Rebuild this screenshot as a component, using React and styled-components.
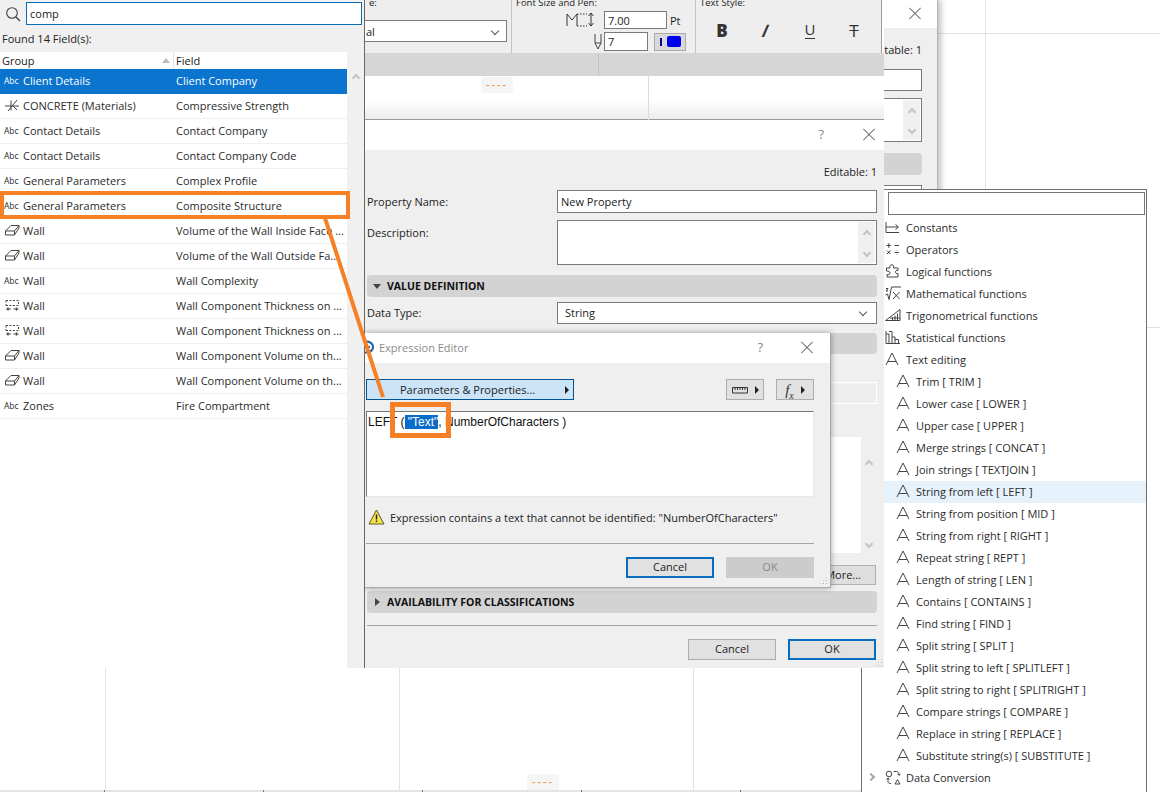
import React from 'react'
import styled, { createGlobalStyle } from 'styled-components'

const GlobalStyle = createGlobalStyle`
  html, body {
    margin: 0;
    padding: 0;
    background: #fff;
    overflow: hidden;
  }
  * {
    box-sizing: border-box;
  }
`

const FIELDS = [
  { icon: 'abc', group: 'Client Details', field: 'Client Company', selected: true },
  { icon: 'concrete', group: 'CONCRETE (Materials)', field: 'Compressive Strength' },
  { icon: 'abc', group: 'Contact Details', field: 'Contact Company' },
  { icon: 'abc', group: 'Contact Details', field: 'Contact Company Code' },
  { icon: 'abc', group: 'General Parameters', field: 'Complex Profile' },
  { icon: 'abc', group: 'General Parameters', field: 'Composite Structure' },
  { icon: 'wall', group: 'Wall', field: 'Volume of the Wall Inside Face ...' },
  { icon: 'wall', group: 'Wall', field: 'Volume of the Wall Outside Fa...' },
  { icon: 'abc', group: 'Wall', field: 'Wall Complexity' },
  { icon: 'thickness', group: 'Wall', field: 'Wall Component Thickness on ...' },
  { icon: 'thickness', group: 'Wall', field: 'Wall Component Thickness on ...' },
  { icon: 'wall', group: 'Wall', field: 'Wall Component Volume on th...' },
  { icon: 'wall', group: 'Wall', field: 'Wall Component Volume on th...' },
  { icon: 'abc', group: 'Zones', field: 'Fire Compartment' },
]

const FUNCTIONS = [
  { icon: 'constants', label: 'Constants' },
  { icon: 'operators', label: 'Operators' },
  { icon: 'puzzle', label: 'Logical functions' },
  { icon: 'root', label: 'Mathematical functions' },
  { icon: 'trig', label: 'Trigonometrical functions' },
  { icon: 'stats', label: 'Statistical functions' },
  { icon: 'letter', label: 'Text editing' },
  { icon: 'letter', label: 'Trim [ TRIM ]', nested: true },
  { icon: 'letter', label: 'Lower case [ LOWER ]', nested: true },
  { icon: 'letter', label: 'Upper case [ UPPER ]', nested: true },
  { icon: 'letter', label: 'Merge strings [ CONCAT ]', nested: true },
  { icon: 'letter', label: 'Join strings [ TEXTJOIN ]', nested: true },
  { icon: 'letter', label: 'String from left [ LEFT ]', nested: true, active: true },
  { icon: 'letter', label: 'String from position [ MID ]', nested: true },
  { icon: 'letter', label: 'String from right [ RIGHT ]', nested: true },
  { icon: 'letter', label: 'Repeat string [ REPT ]', nested: true },
  { icon: 'letter', label: 'Length of string [ LEN ]', nested: true },
  { icon: 'letter', label: 'Contains [ CONTAINS ]', nested: true },
  { icon: 'letter', label: 'Find string [ FIND ]', nested: true },
  { icon: 'letter', label: 'Split string [ SPLIT ]', nested: true },
  { icon: 'letter', label: 'Split string to left [ SPLITLEFT ]', nested: true },
  { icon: 'letter', label: 'Split string to right [ SPLITRIGHT ]', nested: true },
  { icon: 'letter', label: 'Compare strings [ COMPARE ]', nested: true },
  { icon: 'letter', label: 'Replace in string [ REPLACE ]', nested: true },
  { icon: 'letter', label: 'Substitute string(s) [ SUBSTITUTE ]', nested: true },
  { icon: 'convert', label: 'Data Conversion', collapsed: true },
]

const Glyph = ({ width = 16, height = 14, color = '#444', children }) => (
  <svg width={width} height={height} viewBox={`0 0 ${width} ${height}`} fill="none" stroke={color} strokeWidth="1">
    {children}
  </svg>
)

const FIELD_ICONS = {
  concrete: (
    <Glyph>
      <path d="M1 8H15M4 13L13 2M7 2.5V12.5M9 8L13 12" />
    </Glyph>
  ),
  wall: (
    <Glyph>
      <path d="M1.5 8L7 2.5H15V5L10.5 12H1.5ZM1.5 8H10.5V12M10.5 8L15 2.5" />
    </Glyph>
  ),
  thickness: (
    <Glyph>
      <path d="M2 2.5H14.5V7.5M2 2.5V7.5" strokeDasharray="2 1.5" />
      <path d="M2 7.5H14.5" strokeDasharray="2 1.5" />
      <path d="M2 11H7M9.5 11H14.5" />
      <path d="M4 9.5V12.5M12.5 9.5V12.5" strokeWidth="1.4" />
    </Glyph>
  ),
}

const FUNCTION_ICONS = {
  constants: (
    <Glyph width={15} height={14}>
      <path d="M1 2V12.5H14M1 7H13M10.5 4.5L13.5 7L10.5 9.5" />
    </Glyph>
  ),
  operators: (
    <Glyph width={15} height={14}>
      <path d="M1.5 3.5H6M3.75 1.2V5.8M9.5 3.5H14M2 8.5L5.5 12M5.5 8.5L2 12M9.5 10.5H14M11.75 8.5V8.8M11.75 12.2V12.5" />
    </Glyph>
  ),
  puzzle: (
    <Glyph width={15} height={14}>
      <path d="M1.5 7V4H5C4.5 1.5 5.5 .8 7 .8S9.2 2 8.5 4H13V6.5C11 6 10.5 7 10.5 8S11 10 13 9.5V13H2V10.5C3.5 11 5 10.5 5 9S3.5 7 1.5 7Z" />
    </Glyph>
  ),
  root: (
    <Glyph width={16} height={14}>
      <path d="M.5 9L2.5 8L4 13.5L6.5 1H16M8 6L14.5 13M14.5 6L8 13M1 2.5H3L1 5H3" />
    </Glyph>
  ),
  trig: (
    <Glyph width={16} height={14}>
      <path d="M.5 12.5L15 1.5V12.5ZM12.5 12.5V5.5M10 12.5V7.5M7.5 12.5V9.5M5 10H15" />
    </Glyph>
  ),
  stats: (
    <Glyph width={15} height={14}>
      <path d="M1 1V13.5H15M1 4H4V13M4 1.5H7V13M7 7H10V13M10 9.5H13.5V13" />
    </Glyph>
  ),
  letter: (
    <Glyph width={14} height={14}>
      <path d="M1 13L7 1L13 13M3 9.5H11" />
    </Glyph>
  ),
  convert: (
    <Glyph width={16} height={15}>
      <circle cx="4" cy="4" r="2.8" />
      <path d="M8.5 1.5H11.5C13 1.5 14 2.5 14 5M12.5 3.8L14 5.5L15.5 3.8M1.5 9.5L3 8L4.5 9.5M3 8.5V11.5C3 13 4 13.5 6 13.5M10 14L12.5 9.5L15 14Z" />
    </Glyph>
  ),
}

const App = () => (
  <Desktop>
    <GlobalStyle />

    <SheetFooter />
    <FooterBadge>----</FooterBadge>

    <BackDialog>
      <TitleBar>
        <CloseMark />
      </TitleBar>
      <BackBody>
        <EditableLabel>Editable: 1</EditableLabel>
        <BackField />
        <BackDescription>
          <ScrollGutter>
            <Chevron $up />
            <Chevron />
          </ScrollGutter>
        </BackDescription>
        <BackBar />
        <BackField />
      </BackBody>
    </BackDialog>

    <FunctionPanel>
      <FunctionSearch />
      {FUNCTIONS.map(({ icon, label, nested, active, collapsed }) => (
        <FunctionRow key={label} $active={active}>
          <Caret>{collapsed && <Chevron $side />}</Caret>
          <FunctionIcon $nested={nested}>{FUNCTION_ICONS[icon]}</FunctionIcon>
          {label}
        </FunctionRow>
      ))}
    </FunctionPanel>

    <FormatWindow>
      <Ribbon>
        <RibbonSection $width={147}>
          <RibbonLabel>e:</RibbonLabel>
          <StyleSelect>
            al
            <Chevron $dark />
          </StyleSelect>
        </RibbonSection>
        <RibbonSection $width={184}>
          <RibbonLabel>Font Size and Pen:</RibbonLabel>
          <SizeRow>
            <svg width="30" height="16" viewBox="0 0 30 16" fill="none" stroke="#333">
              <path d="M1 14V2L6 8L11 2V14" />
              <path d="M11 2H21M11 14H21" strokeDasharray="1.5 1.5" />
              <path d="M25 1V14M22.5 4L25 1L27.5 4M22.5 11L25 14L27.5 11" />
            </svg>
            <NumberBox $width={63}>7.00</NumberBox>
            <UnitLabel>Pt</UnitLabel>
          </SizeRow>
          <PenRow>
            <svg width="8" height="17" viewBox="0 0 8 17" fill="none" stroke="#444">
              <path d="M1 1V10L4 16L7 10V1M1 10H7" />
            </svg>
            <NumberBox $width={44}>7</NumberBox>
            <PenButton>
              <PenBar />
              <PenSwatch />
            </PenButton>
          </PenRow>
        </RibbonSection>
        <RibbonSection $width={186} $last>
          <RibbonLabel>Text Style:</RibbonLabel>
          <StyleButtons>
            <BoldMark>B</BoldMark>
            <ItalicMark>/</ItalicMark>
            <UnderlineMark>U</UnderlineMark>
            <StrikeMark>T</StrikeMark>
          </StyleButtons>
        </RibbonSection>
      </Ribbon>
      <SheetHeader>
        <SheetHeaderCell />
      </SheetHeader>
      <SheetBody>
        <EmptyBadge>----</EmptyBadge>
      </SheetBody>
    </FormatWindow>

    <PropertyDialog>
      <TitleBar>
        <HelpMark>?</HelpMark>
        <CloseMark />
      </TitleBar>
      <PropertyBody>
        <EditableLabel>Editable: 1</EditableLabel>
        <FormRow $top={9}>
          <span>Property Name:</span>
          <TextBox $height={23}>New Property</TextBox>
        </FormRow>
        <FormRow $top={7} $start>
          <span>Description:</span>
          <TextBox $height={45}>
            <ScrollGutter>
              <Chevron $up />
              <Chevron />
            </ScrollGutter>
          </TextBox>
        </FormRow>
        <SectionBar $top={10} $height={22}>
          <SectionArrow $open />
          VALUE DEFINITION
        </SectionBar>
        <FormRow $top={5} $raised>
          <span>Data Type:</span>
          <TextBox $height={22} $select>
            String
            <Chevron $dark />
          </TextBox>
        </FormRow>
        <SectionBar $top={9} $height={21} />
        <DisabledField />
        <ValueList>
          <ValueListWhite />
          <ListGutter>
            <Chevron $up />
            <Chevron />
          </ListGutter>
        </ValueList>
        <SideButton>More...</SideButton>
        <SectionBar $top={6} $height={22}>
          <SectionArrow />
          AVAILABILITY FOR CLASSIFICATIONS
        </SectionBar>
        <Divider $top={12} />
        <DialogActions $top={13} $inset={1}>
          <DialogButton>Cancel</DialogButton>
          <DialogButton $primary>OK</DialogButton>
        </DialogActions>
      </PropertyBody>
      <Gripper $right={1} $bottom={1} />
    </PropertyDialog>

    <ExpressionDialog>
      <ExpressionTitle>
        <svg width="9" height="14" viewBox="0 0 9 14" fill="none">
          <path d="M0 1.5C4 1 8 3 8 7S4 13 0 12.5" stroke="#1c5fb0" strokeWidth="2" />
          <path d="M0 7H5" stroke="#1c5fb0" strokeWidth="2" />
        </svg>
        <ExpressionName>Expression Editor</ExpressionName>
        <HelpMark>?</HelpMark>
        <CloseMark $gap={38} />
      </ExpressionTitle>
      <ExpressionBody>
        <EditorTools>
          <ParamsButton>
            Parameters &amp; Properties...
            <SideArrow />
          </ParamsButton>
          <ToolButton>
            <svg width="16" height="8" viewBox="0 0 16 8" fill="none" stroke="#333">
              <path d="M.5 1.5H15.5V7H.5ZM3 1.5V4M5.5 1.5V4M8 1.5V4M10.5 1.5V4M13 1.5V4" />
            </svg>
            <SideArrow />
          </ToolButton>
          <ToolButton>
            <FxMark>
              f<sub>x</sub>
            </FxMark>
            <SideArrow />
          </ToolButton>
        </EditorTools>
        <EditorArea>
          LEFT ( <Selected>"Text"</Selected>, NumberOfCharacters )
        </EditorArea>
        <WarningRow>
          <svg width="17" height="16" viewBox="0 0 17 16">
            <path d="M8.5 1L16 15H1Z" fill="#f7e14a" stroke="#5a5a30" />
            <path d="M8.5 5.5V10.5M8.5 11.5V13" stroke="#222" strokeWidth="1.4" />
          </svg>
          Expression contains a text that cannot be identified: "NumberOfCharacters"
        </WarningRow>
        <Divider $top={17} />
        <DialogActions $top={13}>
          <DialogButton $primary>Cancel</DialogButton>
          <DialogButton $disabled>OK</DialogButton>
        </DialogActions>
      </ExpressionBody>
      <Gripper $right={2} $bottom={2} />
    </ExpressionDialog>

    <FieldPanel>
      <SearchRow>
        <svg width="16" height="16" viewBox="0 0 16 16" fill="none" stroke="#444" strokeWidth="1.1">
          <circle cx="7" cy="7" r="5.3" />
          <path d="M11 11L15 15" strokeWidth="1.4" />
        </svg>
        <SearchInput>comp</SearchInput>
      </SearchRow>
      <FoundLabel>Found 14 Field(s):</FoundLabel>
      <FieldArea>
        <FieldTable>
          <FieldHeader>
            <HeaderCell>
              Group
              <SortArrow />
            </HeaderCell>
            <HeaderCell>Field</HeaderCell>
          </FieldHeader>
          {FIELDS.map(({ icon, group, field, selected }, index) => (
            <FieldRow key={index} $selected={selected}>
              <RowIcon>{icon === 'abc' ? <AbcMark>Abc</AbcMark> : FIELD_ICONS[icon]}</RowIcon>
              <span>{group}</span>
              <FieldName>{field}</FieldName>
            </FieldRow>
          ))}
        </FieldTable>
        <FieldScroll>
          <Chevron $up />
        </FieldScroll>
      </FieldArea>
    </FieldPanel>

    <CalloutLine width="1160" height="792" viewBox="0 0 1160 792">
      <path d="M325 218L383 397" stroke="#f58025" strokeWidth="4" />
    </CalloutLine>
    <RowCallout />
    <TextCallout />
  </Desktop>
)

const uiFont = `'Open Sans', 'Noto Sans', sans-serif`

const Desktop = styled.div`
  position: relative;
  width: 1160px;
  height: 792px;
  overflow: hidden;
  color: #222;
  font-family: ${uiFont};
  font-size: 11px;
  background-color: #fff;
  background-image:
    linear-gradient(#e2e2e2, #e2e2e2), linear-gradient(#e2e2e2, #e2e2e2),
    linear-gradient(#e2e2e2, #e2e2e2), linear-gradient(#e2e2e2, #e2e2e2),
    linear-gradient(#e2e2e2, #e2e2e2), linear-gradient(#e2e2e2, #e2e2e2);
  background-repeat: no-repeat;
  background-size: 1px 190px, 222px 1px, 1px 124px, 1px 124px, 1px 124px, 13px 1px;
  background-position: 985px 0, 938px 33px, 105px 668px, 399px 668px, 693px 668px, 1147px 327px;
`

const SheetFooter = styled.div`
  position: absolute;
  left: 0;
  top: 790px;
  width: 861px;
  height: 2px;
  background-color: #e4e4e4;
  background-size: 1px 2px;
  background-repeat: no-repeat;
  background-image:
    linear-gradient(#777, #777), linear-gradient(#777, #777), linear-gradient(#777, #777),
    linear-gradient(#777, #777), linear-gradient(#777, #777);
  background-position: 104px 0, 263px 0, 422px 0, 581px 0, 740px 0;
`

const EmptyBadge = styled.div`
  width: 32px;
  height: 16px;
  margin-top: 1px;
  color: #f39a55;
  font-size: 11px;
  font-weight: 600;
  letter-spacing: 2px;
  line-height: 15px;
  text-align: center;
  border-radius: 2px;
  background: #f5f5f5;
`

const FooterBadge = styled(EmptyBadge)`
  position: absolute;
  left: 527px;
  top: 774px;
  margin-top: 0;
`

const Window = styled.section`
  position: absolute;
  display: flex;
  flex-direction: column;
  background: #efefef;
`

const TitleBar = styled.header`
  display: flex;
  flex: none;
  align-items: center;
  justify-content: flex-end;
  height: 30px;
  padding: 0 9px 2px 0;
  background: #fff;
`

const CloseMark = styled.span`
  position: relative;
  flex: none;
  width: 12px;
  height: 12px;
  margin-left: ${({ $gap }) => $gap || 39}px;

  &::before,
  &::after {
    content: '';
    position: absolute;
    left: -2px;
    top: 5.5px;
    width: 16px;
    height: 1px;
    background: #777;
    transform: rotate(45deg);
  }

  &::after {
    transform: rotate(-45deg);
  }
`

const HelpMark = styled.span`
  color: #888;
  font-size: 13px;
`

const Chevron = styled.i`
  display: block;
  flex: none;
  width: 6px;
  height: 6px;
  border-style: solid;
  border-color: ${({ $dark, $side }) => ($dark ? '#555' : $side ? '#aaa' : '#c4c4c4')};
  border-width: 0 ${({ $dark }) => ($dark ? 1 : 2)}px ${({ $dark }) => ($dark ? 1 : 2)}px 0;
  transform: rotate(${({ $up, $side }) => ($up ? 225 : $side ? -45 : 45)}deg);
`

const ScrollGutter = styled.div`
  position: absolute;
  top: 1px;
  right: 1px;
  bottom: 1px;
  display: flex;
  flex-direction: column;
  align-items: center;
  justify-content: space-between;
  width: 17px;
  padding: 9px 0 7px;
  background: #f0f0f0;
`

const BackDialog = styled(Window)`
  left: 800px;
  top: 0;
  width: 138px;
  height: 200px;
  box-shadow: 3px 0 6px rgba(0, 0, 0, 0.25);
  border-right: 1px solid #b5b5b5;

  ${TitleBar} {
    height: 28px;
    padding-right: 16px;
  }
`

const EditableLabel = styled.div`
  flex: none;
  height: 18px;
  line-height: 18px;
  text-align: right;
  margin-top: 13px;
`

const BackBody = styled.div`
  display: flex;
  flex-direction: column;
  padding-right: 15px;
`

const BackField = styled.div`
  flex: none;
  height: 22px;
  margin-top: 10px;
  background: #fff;
  border: 1px solid #7a7a7a;
`

const BackDescription = styled.div`
  position: relative;
  flex: none;
  height: 44px;
  margin-top: 7px;
  background: #fff;
  border: 1px solid #7a7a7a;
`

const BackBar = styled.div`
  flex: none;
  height: 22px;
  margin-top: 11px;
  border-radius: 4px;
  background: #d3d3d3;
`

const FunctionPanel = styled.aside`
  position: absolute;
  left: 861px;
  top: 189px;
  width: 286px;
  height: 620px;
  background: #fff;
  border: 1px solid #6f6f6f;
`

const FunctionSearch = styled.div`
  width: 257px;
  height: 23px;
  margin: 2px 1px 2px 26px;
  background: #fff;
  border: 1px solid #777;
`

const FunctionRow = styled.div`
  display: flex;
  align-items: center;
  height: 22px;
  padding-bottom: 2px;
  color: #2b2b2b;
  white-space: nowrap;
  background: ${({ $active }) => ($active ? '#e5f1fb' : 'transparent')};
`

const Caret = styled.span`
  flex: none;
  width: 23px;
  padding-left: 6px;
`

const FunctionIcon = styled.span`
  display: flex;
  flex: none;
  width: 21px;
  margin-left: ${({ $nested }) => ($nested ? 11 : 0)}px;
  margin-right: ${({ $nested }) => ($nested ? -1 : 0)}px;
`

const FormatWindow = styled.section`
  position: absolute;
  left: 365px;
  top: 0;
  display: flex;
  flex-direction: column;
  width: 519px;
  height: 120px;
  background: #fff;
`

const Ribbon = styled.div`
  display: flex;
  flex: none;
  width: 517px;
  height: 53px;
  background: #eee;
  border-right: 1px solid #9c9c9c;
`

const RibbonSection = styled.div`
  position: relative;
  flex: none;
  width: ${({ $width }) => $width}px;
  height: 53px;
  border-right: ${({ $last }) => ($last ? 'none' : '1px solid #c4c4c4')};
`

const RibbonLabel = styled.div`
  height: 11px;
  margin-top: -3px;
  padding-left: 4px;
  line-height: 11px;
  font-size: 9.5px;
`

const StyleSelect = styled.div`
  display: flex;
  align-items: center;
  justify-content: space-between;
  width: 147px;
  height: 22px;
  margin: 12px 0 0 -5px;
  padding: 0 8px 0 5px;
  background: #fff;
  border: 1px solid #7a7a7a;
`

const SizeRow = styled.div`
  display: flex;
  align-items: center;
  height: 18px;
  margin-top: 3px;
  padding-left: 54px;

  svg {
    margin-right: 8px;
  }
`

const PenRow = styled.div`
  display: flex;
  align-items: center;
  height: 19px;
  margin-top: 3px;
  padding-left: 82px;

  svg {
    margin-right: 2px;
  }
`

const NumberBox = styled.div`
  flex: none;
  width: ${({ $width }) => $width}px;
  height: 100%;
  padding-left: 3px;
  line-height: 17px;
  background: #fff;
  border: 1px solid #7a7a7a;
`

const UnitLabel = styled.span`
  margin-left: 3px;
`

const PenButton = styled.div`
  display: flex;
  align-items: center;
  gap: 5px;
  flex: none;
  width: 32px;
  height: 18px;
  margin-left: 6px;
  padding-left: 5px;
  background: #d9d9d9;
  border: 1px solid #aaa;
`

const PenBar = styled.span`
  width: 2px;
  height: 8px;
  background: #00008c;
`

const PenSwatch = styled.span`
  width: 14px;
  height: 11px;
  border-radius: 2px;
  background: #0000f0;
`

const StyleButtons = styled.div`
  display: grid;
  grid-template-columns: repeat(4, 44px);
  justify-items: center;
  align-items: center;
  height: 24px;
  margin: 10px 0 0 4px;
  color: #333;
  font-size: 17px;
`

const BoldMark = styled.span`
  font-weight: 800;
`

const ItalicMark = styled.span`
  font-weight: 700;
  transform: skewX(-4deg);
`

const UnderlineMark = styled.span`
  font-size: 15px;
  line-height: 17px;
  border-bottom: 1px solid #333;
`

const StrikeMark = styled.span`
  font-size: 17px;
  text-decoration: line-through;
`

const SheetHeader = styled.div`
  flex: none;
  height: 23px;
  background: #d6d6d6;
`

const SheetHeaderCell = styled.div`
  width: 234px;
  height: 100%;
  border-right: 1px solid #c2c2c2;
`

const SheetBody = styled.div`
  flex: 1;
  padding-left: 116px;
  background-image:
    linear-gradient(#dcdcdc, #dcdcdc),
    linear-gradient(#fff 55%, #ececec 98%, #9a9a9a 98%);
  background-repeat: no-repeat;
  background-size: 1px 100%, 100% 100%;
  background-position: 283px 0, 0 0;
`

const PropertyDialog = styled(Window)`
  left: 365px;
  top: 120px;
  width: 519px;
  height: 548px;
`

const PropertyBody = styled.div`
  display: flex;
  flex-direction: column;
  padding: 0 7px 0 2px;
`

const FormRow = styled.div`
  display: grid;
  grid-template-columns: 190px 320px;
  align-items: ${({ $start }) => ($start ? 'start' : 'center')};
  flex: none;
  margin-top: ${({ $top }) => $top}px;

  > span {
    padding-top: ${({ $start }) => ($start ? 5 : 0)}px;
    padding-bottom: ${({ $raised }) => ($raised ? 2 : 0)}px;
  }
`

const TextBox = styled.div`
  position: relative;
  display: flex;
  align-items: center;
  justify-content: space-between;
  height: ${({ $height }) => $height}px;
  padding: 0 ${({ $select }) => ($select ? 10 : 3)}px ${({ $select }) => ($select ? 2 : 0)}px ${({ $select }) => ($select ? 7 : 3)}px;
  background: #fff;
  border: 1px solid #7a7a7a;
`

const SectionBar = styled.div`
  display: flex;
  align-items: center;
  flex: none;
  height: ${({ $height }) => $height}px;
  margin-top: ${({ $top }) => $top}px;
  padding-left: 6px;
  color: #111;
  font-weight: 700;
  font-size: 10.5px;
  border-radius: 4px;
  background: #d3d3d3;
`

const SectionArrow = styled.i`
  width: 0;
  height: 0;
  margin-right: 6px;
  border-style: solid;
  border-color: transparent;
  ${({ $open }) => ($open
    ? 'border-width: 5px 4px 0; border-top-color: #444;'
    : 'border-width: 4px 0 4px 5px; border-left-color: #444; margin-left: 2px; margin-right: 7px;')}
`

const DisabledField = styled.div`
  flex: none;
  width: 320px;
  height: 22px;
  margin: 28px 0 0 190px;
  background: #eee;
  border: 1px solid #fff;
`

const ValueList = styled.div`
  display: flex;
  flex: none;
  height: 116px;
  margin: 33px 0 0 190px;
`

const ValueListWhite = styled.div`
  width: 304px;
  background: #fff;
`

const ListGutter = styled.div`
  display: flex;
  flex-direction: column;
  align-items: center;
  justify-content: space-between;
  width: 16px;
  padding: 24px 0 6px;
`

const SideButton = styled.div`
  flex: none;
  width: 320px;
  height: 20px;
  margin: 12px 0 0 189px;
  padding-right: 14px;
  line-height: 18px;
  text-align: right;
  background: #dedede;
  border: 1px solid #b0b0b0;
`

const Divider = styled.hr`
  flex: none;
  width: 100%;
  height: 1px;
  margin: ${({ $top }) => $top}px 0 0;
  border: 0;
  background: #a5a5a5;
`

const DialogActions = styled.div`
  display: flex;
  flex: none;
  justify-content: flex-end;
  gap: 12px;
  margin-top: ${({ $top }) => $top}px;
  margin-right: ${({ $inset }) => $inset || 0}px;
`

const DialogButton = styled.div`
  width: 88px;
  height: 21px;
  color: ${({ $disabled }) => ($disabled ? '#8a8a8a' : '#222')};
  line-height: ${({ $primary }) => ($primary ? 15 : 17)}px;
  text-align: center;
  background: ${({ $disabled }) => ($disabled ? '#ccc' : '#e1e1e1')};
  border: ${({ $primary, $disabled }) => ($primary
    ? '2px solid #0a6cc0'
    : `1px solid ${$disabled ? '#ccc' : '#adadad'}`)};
`

const Gripper = styled.i`
  position: absolute;
  right: ${({ $right }) => $right}px;
  bottom: ${({ $bottom }) => $bottom}px;
  width: 9px;
  height: 9px;
  background-image: radial-gradient(#aaa 40%, transparent 45%);
  background-size: 3px 3px;
  clip-path: polygon(100% 0, 100% 100%, 0 100%);
`

const ExpressionDialog = styled(Window)`
  left: 365px;
  top: 333px;
  width: 466px;
  height: 255px;
  border-right: 1px solid #a8a8a8;
  border-bottom: 1px solid #a8a8a8;
  box-shadow: 0 0 6px rgba(0, 0, 0, 0.35);
`

const ExpressionTitle = styled(TitleBar)`
  justify-content: flex-start;
  padding-right: 17px;

  ${HelpMark} {
    margin-left: auto;
  }
`

const ExpressionName = styled.span`
  margin-left: 5px;
  color: #8a8a8a;
`

const ExpressionBody = styled.div`
  display: flex;
  flex-direction: column;
  padding: 16px 16px 0 1px;
`

const EditorTools = styled.div`
  display: flex;
  align-items: center;
  flex: none;
  height: 21px;
`

const SideArrow = styled.i`
  width: 0;
  height: 0;
  border-style: solid;
  border-color: transparent;
  border-width: 4px 0 4px 4px;
  border-left-color: #222;
`

const ParamsButton = styled.div`
  display: flex;
  align-items: center;
  justify-content: space-between;
  width: 208px;
  height: 100%;
  margin-right: auto;
  padding: 0 4px 0 33px;
  background: #cce4f7;
  border: 1px solid #005499;
`

const ToolButton = styled.div`
  display: flex;
  align-items: center;
  justify-content: center;
  gap: 7px;
  width: 38px;
  height: 100%;
  margin-left: 12px;
  background: #e1e1e1;
  border: 1px solid #adadad;
`

const FxMark = styled.span`
  color: #333;
  font-family: 'Liberation Serif', serif;
  font-size: 15px;
  font-style: italic;
  line-height: 14px;

  sub {
    font-size: 10px;
    line-height: 0;
  }
`

const EditorArea = styled.div`
  flex: none;
  height: 86px;
  margin-top: 11px;
  padding: 3px 0 0 1px;
  color: #111;
  font-family: 'Liberation Sans', Arial, sans-serif;
  font-size: 12px;
  line-height: 15px;
  background: #fff;
  border: 1px solid #e8e8e8;
  border-top: 1px solid #777;
  border-left: 1px solid #777;
`

const Selected = styled.span`
  margin-left: -3px;
  padding-left: 3px;
  color: #fff;
  background: #0a6cc9;
`

const WarningRow = styled.div`
  display: flex;
  align-items: center;
  gap: 5px;
  flex: none;
  height: 18px;
  margin-top: 11px;
  padding-left: 2px;
  white-space: nowrap;
`

const FieldPanel = styled.aside`
  position: absolute;
  left: 0;
  top: 0;
  display: flex;
  flex-direction: column;
  width: 365px;
  height: 668px;
  background: #f0f0f0;
  border-right: 1px solid #666;
`

const SearchRow = styled.div`
  display: flex;
  align-items: center;
  gap: 5px;
  flex: none;
  height: 23px;
  margin-top: 2px;
  padding: 0 2px 0 5px;
`

const SearchInput = styled.div`
  flex: 1;
  height: 23px;
  padding-left: 3px;
  line-height: 21px;
  background: #fff;
  border: 1px solid #0a6cb5;
`

const FoundLabel = styled.div`
  flex: none;
  height: 27px;
  padding-left: 2px;
  line-height: 28px;
`

const FieldArea = styled.div`
  display: flex;
  flex: 1;
`

const FieldTable = styled.div`
  flex: none;
  width: 347px;
  background: #fff;
`

const FieldHeader = styled.div`
  display: grid;
  grid-template-columns: 174px 1fr;
  height: 17px;
`

const HeaderCell = styled.div`
  display: flex;
  align-items: center;
  justify-content: space-between;
  padding: 0 3px 0 2px;
  border-right: 1px solid #e4e4e4;

  & + & {
    padding-left: 2px;
    border-right: none;
  }
`

const SortArrow = styled.i`
  width: 0;
  height: 0;
  border-style: solid;
  border-color: transparent;
  border-width: 0 4.5px 5px;
  border-bottom-color: #bdbdbd;
`

const FieldRow = styled.div`
  display: grid;
  grid-template-columns: 23px 153px 1fr;
  align-items: center;
  height: 25px;
  padding-bottom: 2px;
  white-space: nowrap;
  color: ${({ $selected }) => ($selected ? '#fff' : '#2b2b2b')};
  background: ${({ $selected }) => ($selected ? '#0a74cf' : '#fff')};
  border-bottom: 1px solid ${({ $selected }) => ($selected ? '#0a74cf' : '#efefef')};
`

const FieldName = styled.span`
  overflow: hidden;
`

const RowIcon = styled.span`
  display: flex;
  padding-left: 4px;
`

const AbcMark = styled.span`
  font-size: 8.5px;
  color: inherit;
`

const FieldScroll = styled.div`
  display: flex;
  flex: 1;
  justify-content: center;
  padding-top: 23px;
`

const CalloutLine = styled.svg`
  position: absolute;
  left: 0;
  top: 0;
  pointer-events: none;
`

const RowCallout = styled.div`
  position: absolute;
  left: 0;
  top: 191px;
  width: 350px;
  height: 28px;
  border: 4px solid #f58025;
`

const TextCallout = styled.div`
  position: absolute;
  left: 390px;
  top: 402px;
  width: 61px;
  height: 36px;
  border: 5px solid #f58025;
`

export default App
